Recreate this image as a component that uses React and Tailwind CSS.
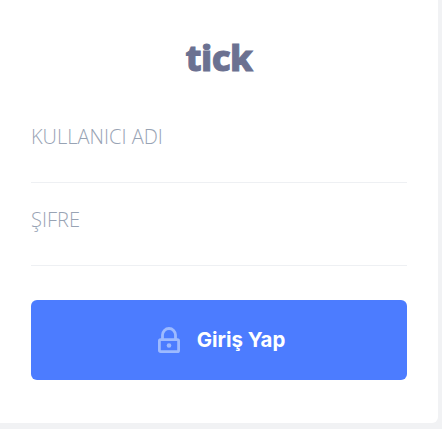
const LockIcon = () => (
  <svg width="22" height="26" viewBox="0 0 22 26" fill="none" stroke="#9dbaff" strokeWidth="2.8" className="block">
    <path d="M4.5 13V8a6.5 6.5 0 0 1 13 0V13" />
    <rect x="1.4" y="12.6" width="19.2" height="12" rx="1.2" />
    <circle cx="11" cy="18.5" r="2.3" fill="#9dbaff" stroke="none" />
  </svg>
)

export default function App() {
  return (
    <div className="h-[429px] w-[442px] overflow-hidden bg-[#f1f2f4]">
      <div className="h-[423px] w-[438px] rounded-br-md bg-white px-[31px] pt-[34px] font-['Open_Sans',sans-serif]">
        <h1 className="text-center text-[36px] leading-[48px] font-extrabold tracking-[-0.6px] text-[#6b7191] font-['Noto_Sans',sans-serif] [-webkit-text-stroke:1px_#6b7191]">tick</h1>

        <div className="mt-[31px] h-[70px] border-b border-[#eef0f3] pt-[11px] text-[20px] leading-[26px] font-light text-[#98a3b4]">KULLANICI ADI</div>
        <div className="mt-[13px] h-[70px] border-b border-[#eef0f3] pt-[11px] text-[20px] leading-[26px] font-light text-[#98a3b4]">ŞIFRE</div>

        <button className="mt-[34px] flex h-[80px] w-full items-center justify-center gap-[17px] rounded-md bg-[#4c7cff] pl-[5px] text-[20.4px] font-bold text-white font-['Inter',sans-serif]">
          <LockIcon />
          <span>Giriş Yap</span>
        </button>
      </div>
    </div>
  )
}
